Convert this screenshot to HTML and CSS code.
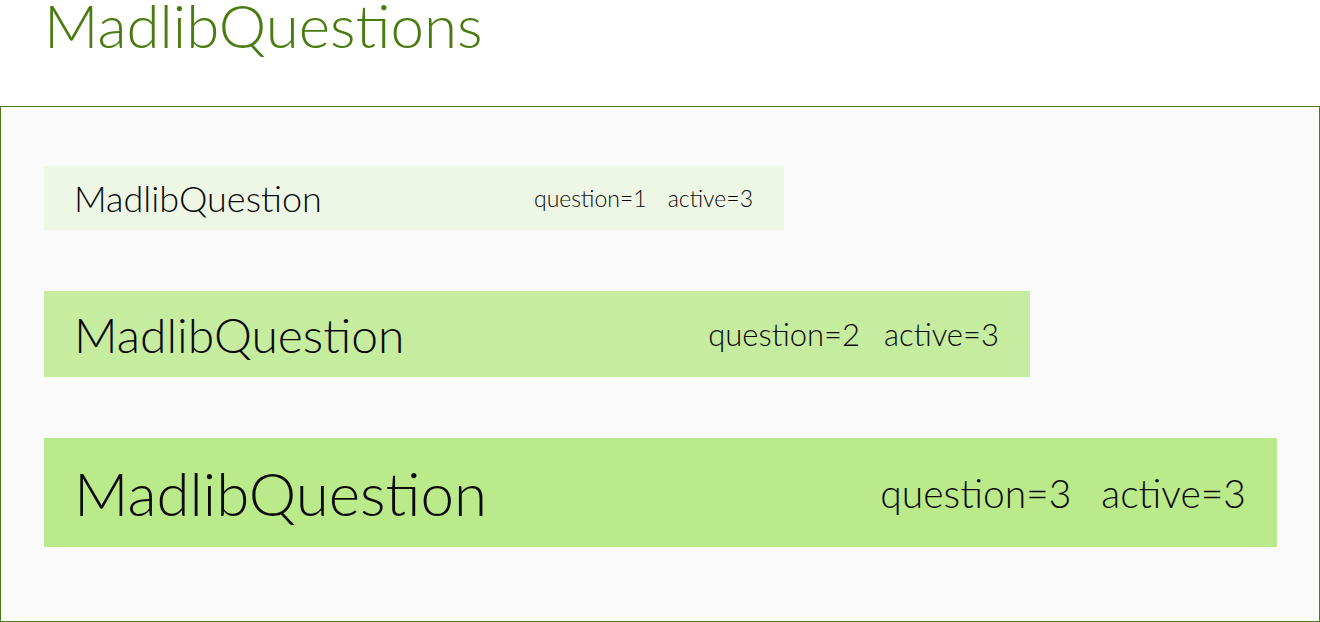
FILE: index.html
```html
<!DOCTYPE html>
<html>
<head>
<meta charset="utf-8">
<link rel="stylesheet" href="styles.css">
</head>
<body>
<h1 class="title">MadlibQuestions</h1>
<div class="box">
  <div class="bar bar-1">
    <span class="name">MadlibQuestion</span>
    <span class="meta"><span>question=1</span><span>active=3</span></span>
  </div>
  <div class="bar bar-2">
    <span class="name">MadlibQuestion</span>
    <span class="meta"><span>question=2</span><span>active=3</span></span>
  </div>
  <div class="bar bar-3">
    <span class="name">MadlibQuestion</span>
    <span class="meta"><span>question=3</span><span>active=3</span></span>
  </div>
</div>
</body>
</html>
```
FILE: styles.css
```css
html, body {
  margin: 0;
  padding: 0;
  background: #ffffff;
}
body {
  font-family: Lato, "Open Sans", sans-serif;
  font-weight: 300;
  color: #0a0a0a;
  width: 1320px;
  height: 622px;
  overflow: hidden;
}
.title {
  margin: 0;
  padding: 0 0 0 44px;
  height: 106px;
  box-sizing: border-box;
  font-size: 60px;
  line-height: 50px;
  font-weight: 300;
  color: #4a7b0f;
}
.box {
  box-sizing: border-box;
  width: 1320px;
  height: 516px;
  border: 1px solid #4e7a16;
  background: #fafafa;
  padding: 59px 0 0 43px;
  display: flex;
  flex-direction: column;
  gap: 61px;
}
.bar {
  box-sizing: border-box;
  display: flex;
  align-items: center;
  justify-content: space-between;
  padding: 0 31px 0 30px;
}
.meta {
  display: flex;
}
.bar-1 {
  width: 740px;
  height: 64px;
  background: #eef7e5;
}
.bar-1 .name { font-size: 36px; }
.bar-1 .meta { font-size: 23px; gap: 21px; }
.bar-2 {
  width: 986px;
  height: 86px;
  background: #c6eca0;
}
.bar-2 .name { font-size: 48px; }
.bar-2 .meta { font-size: 31px; gap: 24px; }
.bar-3 {
  width: 1233px;
  height: 109px;
  background: #bbea8a;
}
.bar-3 .name { font-size: 60px; }
.bar-3 .meta { font-size: 39px; gap: 30px; }
```
